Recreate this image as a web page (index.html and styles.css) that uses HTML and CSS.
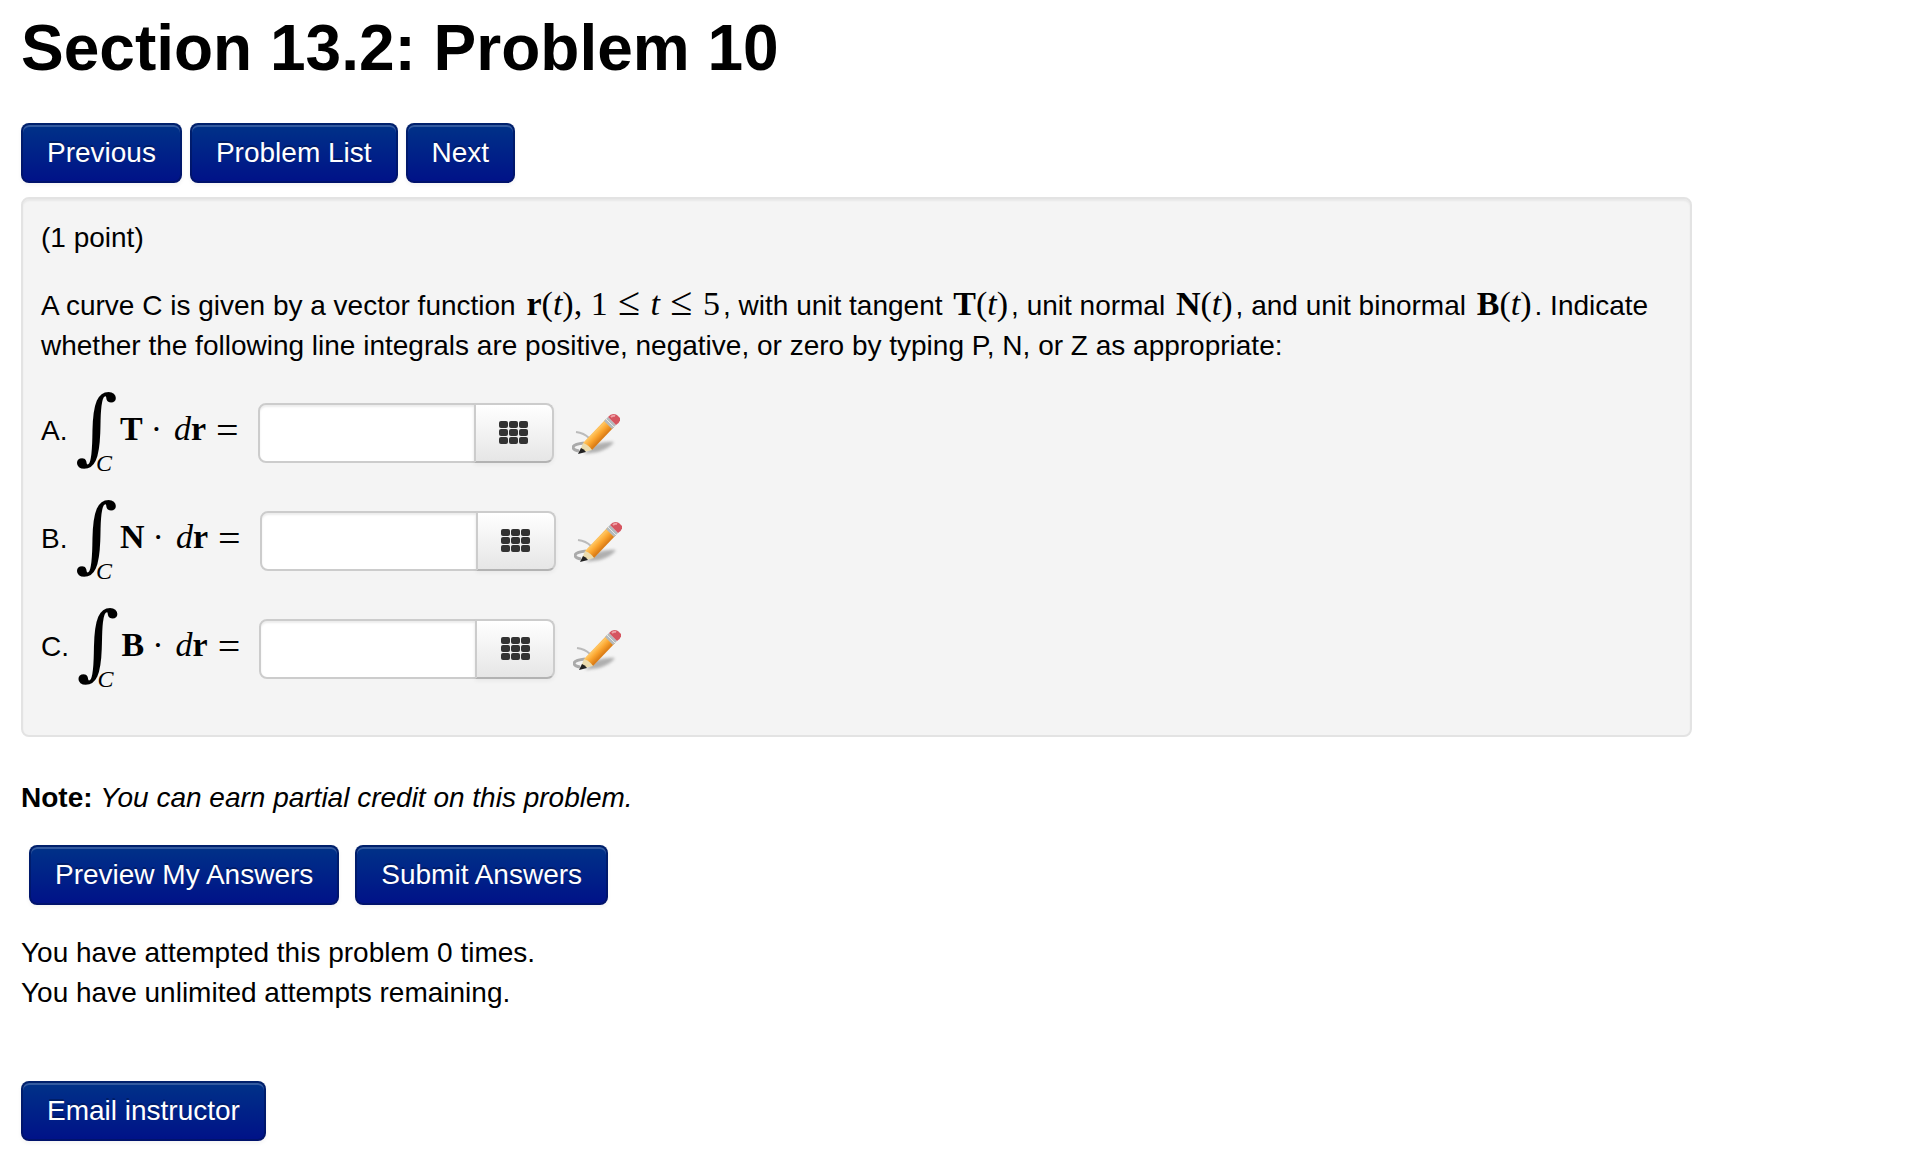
FILE: index.html
```html
<!DOCTYPE html>
<html lang="en">
<head>
    <meta charset="UTF-8">
    <meta name="viewport" content="width=device-width, initial-scale=1.0">
    <link rel="stylesheet" href="styles.css">
    <title>Section 13.2: Problem 10</title>
</head>
<body>
    <svg class="sprite" aria-hidden="true">
        <defs>
            <linearGradient id="wood" gradientUnits="userSpaceOnUse" x1="20" y1="15" x2="30" y2="25">
                <stop offset="0" stop-color="#f0901c"/>
                <stop offset="0.35" stop-color="#ffc45e"/>
                <stop offset="0.65" stop-color="#fba52f"/>
                <stop offset="1" stop-color="#dd7f18"/>
            </linearGradient>
            <filter id="soft" x="-20%" y="-50%" width="140%" height="200%">
                <feGaussianBlur stdDeviation="1.8"/>
            </filter>
        </defs>
        <symbol id="keypad" viewBox="0 0 29 23">
            <g fill="#333">
                <rect x="0" y="0" width="9" height="7" rx="2"/>
                <rect x="10" y="0" width="9" height="7" rx="2"/>
                <rect x="20" y="0" width="9" height="7" rx="2"/>
                <rect x="0" y="8" width="9" height="7" rx="2"/>
                <rect x="10" y="8" width="9" height="7" rx="2"/>
                <rect x="20" y="8" width="9" height="7" rx="2"/>
                <rect x="0" y="16" width="9" height="7" rx="2"/>
                <rect x="10" y="16" width="9" height="7" rx="2"/>
                <rect x="20" y="16" width="9" height="7" rx="2"/>
            </g>
        </symbol>
        <symbol id="pencil" viewBox="0 0 48 48">
            <path d="M12 41L22 32Q34 28 42 29Q38 35 26 39Z" fill="#777" opacity="0.55" filter="url(#soft)"/>
            <path d="M4 19Q12 20 17 25" fill="none" stroke="#bbb" stroke-width="2"/>
            <path d="M12 30Q2 31 1 34Q1 37 7 38" fill="none" stroke="#aaa" stroke-width="3"/>
            <path d="M11 30L34 6L42 14L20 37Z" fill="url(#wood)"/>
            <path d="M11 30L7 40L20 37Q17 32 11 30Z" fill="#ecdcae"/>
            <path d="M9 35L6 41L14 39Q12 36 9 35Z" fill="#222"/>
            <path d="M32 8L36 4L44 12L40 16Z" fill="#b4babd"/>
            <path d="M34 6L42 14" stroke="#e4e7e8" stroke-width="1"/>
            <path d="M36 4Q40 -1 45 2L48 5Q49 9 44 12Z" fill="#d55560"/>
            <path d="M39 4Q41 2 43 3" fill="none" stroke="#f0a0a6" stroke-width="2"/>
        </symbol>
    </svg>

    <h1>Section 13.2: Problem 10</h1>

    <nav class="problem-nav">
        <a class="btn" href="#">Previous</a>
        <a class="btn" href="#">Problem List</a>
        <a class="btn" href="#">Next</a>
    </nav>

    <form id="problem-form">
        <div class="problem">
            <p>(1 point)</p>
            <p>A curve C is given by a vector function <span class="math"><b>r</b>(<i>t</i>), 1 <span class="rel">≤</span> <i>t</i> <span class="rel">≤</span> 5</span>, with unit tangent <span class="math"><b>T</b>(<i>t</i>)</span>, unit normal <span class="math"><b>N</b>(<i>t</i>)</span>, and unit binormal <span class="math"><b>B</b>(<i>t</i>)</span>. Indicate whether the following line integrals are positive, negative, or zero by typing P, N, or Z as appropriate:</p>

            <div class="answer">
                <label for="answer-a">A. <span class="integral"><span class="int">∫</span><sub>C</sub><b>T</b><span class="dot">·</span><i>d</i><b>r</b><span class="eq">=</span></span></label>
                <div class="answer-input">
                    <input type="text" id="answer-a">
                    <button type="button" aria-label="Equation editor"><svg class="keypad"><use href="#keypad"/></svg></button>
                </div>
                <svg class="pencil"><use href="#pencil"/></svg>
            </div>
            <div class="answer">
                <label for="answer-b">B. <span class="integral"><span class="int">∫</span><sub>C</sub><b>N</b><span class="dot">·</span><i>d</i><b>r</b><span class="eq">=</span></span></label>
                <div class="answer-input">
                    <input type="text" id="answer-b">
                    <button type="button" aria-label="Equation editor"><svg class="keypad"><use href="#keypad"/></svg></button>
                </div>
                <svg class="pencil"><use href="#pencil"/></svg>
            </div>
            <div class="answer">
                <label for="answer-c">C. <span class="integral"><span class="int">∫</span><sub>C</sub><b>B</b><span class="dot">·</span><i>d</i><b>r</b><span class="eq">=</span></span></label>
                <div class="answer-input">
                    <input type="text" id="answer-c">
                    <button type="button" aria-label="Equation editor"><svg class="keypad"><use href="#keypad"/></svg></button>
                </div>
                <svg class="pencil"><use href="#pencil"/></svg>
            </div>
        </div>

        <p class="note"><b>Note:</b> <i>You can earn partial credit on this problem.</i></p>

        <div class="submit-buttons">
            <button class="btn" type="button">Preview My Answers</button>
            <button class="btn" type="submit">Submit Answers</button>
        </div>
    </form>

    <p class="attempts">You have attempted this problem 0 times.<br>You have unlimited attempts remaining.</p>

    <button class="btn" type="button">Email instructor</button>
</body>
</html>
```
FILE: styles.css
```css
body {
    margin: 0;
    padding: 8px 21px 20px;
    font-family: "Helvetica Neue", "Liberation Sans", Helvetica, Arial, sans-serif;
    font-size: 28px;
    line-height: 40px;
    color: black;
    background-color: white;
}

.sprite {
    position: absolute;
    width: 0;
    height: 0;
}

h1 {
    margin: 0 0 35px;
    font-size: 64px;
    line-height: 80px;
}

p {
    margin: 0 0 28px;
}

.problem-nav {
    display: flex;
    gap: 8px;
    margin-bottom: 14px;
}

.btn {
    display: inline-block;
    box-sizing: border-box;
    padding: 8px 24px;
    font: inherit;
    color: white;
    text-decoration: none;
    text-shadow: 0 -2px 0 rgba(0, 0, 0, 0.25);
    background-image: linear-gradient(to bottom, #003388, #001188);
    background-origin: border-box;
    border: 2px solid rgba(0, 20, 90, 0.6);
    border-radius: 8px;
    box-shadow: inset 0 2px 0 rgba(255, 255, 255, 0.2), 0 2px 4px rgba(0, 0, 0, 0.05);
    cursor: pointer;
}

.btn:hover {
    background-image: linear-gradient(to bottom, #001188, #001188);
}

.problem {
    box-sizing: border-box;
    width: 88.5%;
    padding: 19px 18px 32px;
    margin-bottom: 41px;
    background-color: #f4f4f4;
    border: 2px solid #e3e3e3;
    border-radius: 8px;
    box-shadow: inset 0 2px 2px rgba(0, 0, 0, 0.05);
}

.problem p:nth-child(2) {
    margin-bottom: 13px;
}

.math, .integral {
    font-family: "Liberation Serif", "Times New Roman", serif;
    font-size: 34px;
    line-height: 20px;
}

.math {
    margin: 0 3px;
}

.rel {
    margin: 0 2px;
    font-size: 40px;
}

.answer {
    display: flex;
    align-items: center;
    height: 108px;
}

.answer label {
    padding-top: 8px;
    white-space: nowrap;
}

.int {
    font-family: "DejaVu Serif", serif;
    font-size: 82px;
    font-style: italic;
    line-height: 0;
    vertical-align: -14px;
}

.integral sub {
    margin: 0 8px 0 -22px;
    font-size: 24px;
    font-style: italic;
    line-height: 0;
    vertical-align: -31px;
}

.dot {
    margin: 0 12px 0 8px;
}

.eq {
    margin-left: 10px;
    font-size: 40px;
    line-height: 0;
    vertical-align: -4px;
}

.answer-input {
    display: flex;
    margin: 0 18px 0 19px;
}

.answer-input input {
    box-sizing: border-box;
    width: 218px;
    height: 60px;
    padding: 8px 12px;
    font: inherit;
    background-color: white;
    border: 2px solid #ccc;
    border-radius: 8px 0 0 8px;
    box-shadow: inset 0 2px 2px rgba(0, 0, 0, 0.075);
}

.answer-input button {
    display: flex;
    align-items: center;
    justify-content: center;
    box-sizing: border-box;
    width: 80px;
    height: 60px;
    margin-left: -2px;
    padding: 0 0 2px;
    background-image: linear-gradient(to bottom, white, #e6e6e6);
    border: 2px solid #ccc;
    border-bottom-color: #b3b3b3;
    border-radius: 0 8px 8px 0;
    box-shadow: 0 2px 4px rgba(0, 0, 0, 0.05);
    cursor: pointer;
}

.keypad {
    width: 29px;
    height: 23px;
}

.pencil {
    width: 48px;
    height: 48px;
    margin-top: 8px;
}

.note {
    margin-bottom: 27px;
}

.submit-buttons {
    display: flex;
    gap: 16px;
    margin: 0 8px 28px;
}

.attempts {
    margin-bottom: 68px;
}
```
